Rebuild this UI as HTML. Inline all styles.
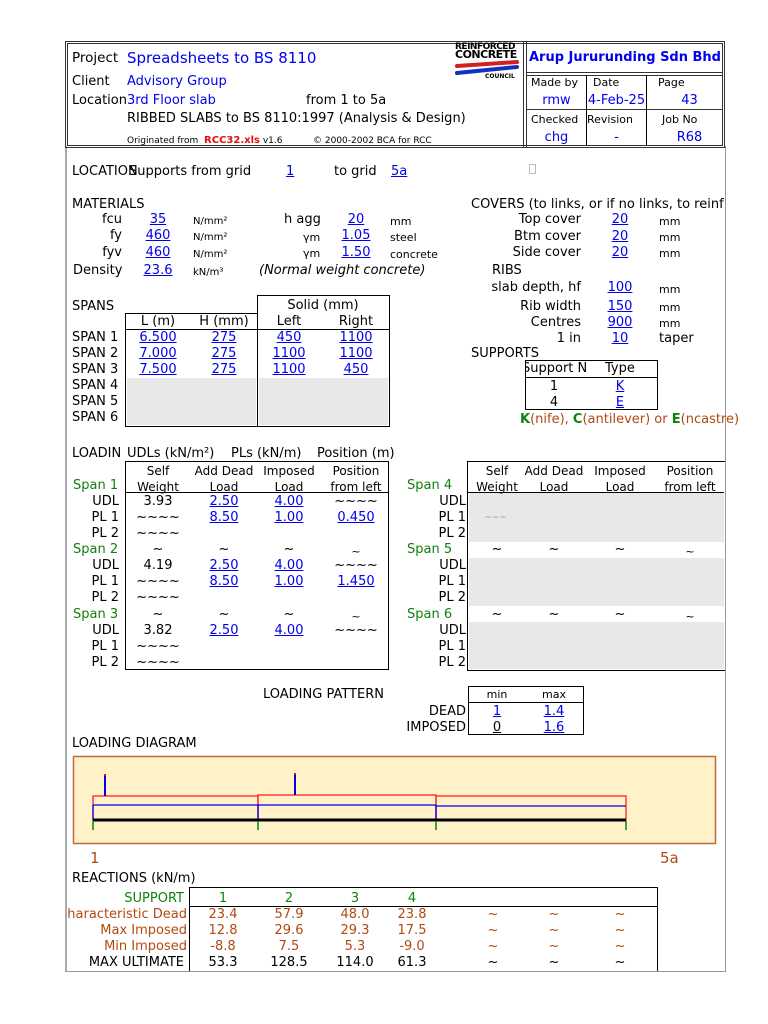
<!DOCTYPE html>
<html><head><meta charset="utf-8"><style>
body{margin:0;background:#fff;width:768px;height:1024px;position:relative;overflow:hidden;font-family:"DejaVu Sans","Liberation Sans",sans-serif;color:#000}
.t{position:absolute;white-space:nowrap;font-size:13px;line-height:16px;transform:translateY(2px)}
.h{font-size:12px}
.r{text-align:right}
.c{text-align:center}
.b{color:#0000ee}
.u{color:#0000ee;text-decoration:underline}
.g{color:#108010}
.br{color:#b04a10}
.s{font-size:10px}
.box{position:absolute;border:1px solid #000;box-sizing:border-box}
.gray{position:absolute;background:#e8e8e8}
.hl{position:absolute;height:1px;background:#000}
.vl{position:absolute;width:1px;background:#000}
</style></head><body>
<div style="position:absolute;left:65px;top:146px;width:658px;height:825px;border:1px solid #999;border-top:none;border-left:2px solid #aaa"></div>
<div style="position:absolute;left:65px;top:41px;width:654px;height:101px;border:3px double #333"></div>
<div style="position:absolute;left:523px;top:41px;width:1px;height:106px;background:#333"></div>
<div style="position:absolute;left:526px;top:41px;width:1px;height:106px;background:#333"></div>
<div class="hl" style="left:526px;top:72px;width:197px;background:#333"></div>
<div class="hl" style="left:526px;top:75px;width:197px;background:#333"></div>
<div class="hl" style="left:526px;top:109px;width:197px;background:#333"></div>
<div class="vl" style="left:586px;top:75px;height:70px"></div>
<div class="vl" style="left:646px;top:75px;height:70px"></div>

<div class="t" style="left:72px;top:48px;font-size:13.5px">Project</div>
<div class="t b" style="left:127px;top:48px;font-size:15px">Spreadsheets to BS 8110</div>
<div class="t" style="left:72px;top:72px">Client</div>
<div class="t b" style="left:127px;top:72px">Advisory Group</div>
<div class="t" style="left:72px;top:91px">Location</div>
<div class="t b" style="left:127px;top:91px">3rd Floor slab</div>
<div class="t" style="left:306px;top:91px">from 1 to 5a</div>
<div class="t" style="left:127px;top:109px">RIBBED SLABS to BS 8110:1997 (Analysis &amp; Design)</div>
<div class="t" style="left:127px;top:131px;font-size:9px">Originated from &nbsp;<span style="color:#e01010;font-weight:bold;font-size:10px">RCC32.xls</span> v1.6</div>
<div class="t" style="left:313px;top:131px;font-size:9px">© 2000-2002 BCA for RCC</div>
<div class="t" style="left:455px;top:43px;font-size:9px;line-height:8px;font-weight:bold;letter-spacing:-0.5px;transform:none">REINFORCED</div>
<div class="t" style="left:455px;top:50px;font-size:11px;line-height:10px;font-weight:900;letter-spacing:-0.5px;transform:none">CONCRETE</div>
<svg style="position:absolute;left:454px;top:60px" width="66" height="18"><line x1="3" y1="6" x2="63" y2="2" stroke="#d02020" stroke-width="4" stroke-linecap="round"/><line x1="3" y1="13" x2="63" y2="7" stroke="#1030c0" stroke-width="4" stroke-linecap="round"/></svg>
<div class="t" style="left:485px;top:73px;font-size:6px;line-height:7px;font-weight:bold;transform:none">COUNCIL</div>

<div class="t c" style="left:527px;top:48px;width:196px;font-weight:bold;color:#0000ee">Arup Jururunding Sdn Bhd</div>
<div class="t" style="left:531px;top:73px;font-size:11px">Made by</div>
<div class="t" style="left:593px;top:73px;font-size:11px">Date</div>
<div class="t" style="left:658px;top:73px;font-size:11px">Page</div>
<div class="t c b" style="left:527px;top:91px;width:59px">rmw</div>
<div class="t c b" style="left:587px;top:91px;width:59px">4-Feb-25</div>
<div class="t c b" style="left:660px;top:91px;width:59px">43</div>
<div class="t" style="left:531px;top:110px;font-size:11px">Checked</div>
<div class="t" style="left:587px;top:110px;font-size:11px">Revision</div>
<div class="t" style="left:662px;top:110px;font-size:11px">Job No</div>
<div class="t c b" style="left:527px;top:128px;width:59px">chg</div>
<div class="t c b" style="left:587px;top:128px;width:59px">-</div>
<div class="t c b" style="left:660px;top:128px;width:59px">R68</div>

<div class="t" style="left:72px;top:162px">LOCATION</div>
<div class="t" style="left:129px;top:162px">Supports from grid</div>
<div class="t u" style="left:286px;top:162px">1</div>
<div class="t" style="left:334px;top:162px">to grid</div>
<div class="t u" style="left:391px;top:162px">5a</div>
<div style="position:absolute;left:529px;top:164px;width:5px;height:8px;border:1px solid #bbb"></div>

<div class="t" style="left:72px;top:195px">MATERIALS</div>
<div class="t r" style="left:60px;top:210px;width:62px">fcu</div>
<div class="t r" style="left:60px;top:226px;width:62px">fy</div>
<div class="t r" style="left:60px;top:243px;width:62px">fyv</div>
<div class="t" style="left:73px;top:261px">Density</div>
<div class="t u c" style="left:138px;top:210px;width:40px">35</div>
<div class="t u c" style="left:138px;top:226px;width:40px">460</div>
<div class="t u c" style="left:138px;top:243px;width:40px">460</div>
<div class="t u c" style="left:138px;top:261px;width:40px">23.6</div>
<div class="t s" style="left:193px;top:212px">N/mm²</div>
<div class="t s" style="left:193px;top:228px">N/mm²</div>
<div class="t s" style="left:193px;top:245px">N/mm²</div>
<div class="t s" style="left:193px;top:263px">kN/m³</div>
<div class="t" style="left:284px;top:210px">h agg</div>
<div class="t s" style="left:303px;top:228px;font-size:11px">γm</div>
<div class="t s" style="left:303px;top:244px;font-size:11px">γm</div>
<div class="t u c" style="left:336px;top:210px;width:40px">20</div>
<div class="t u c" style="left:336px;top:226px;width:40px">1.05</div>
<div class="t u c" style="left:336px;top:243px;width:40px">1.50</div>
<div class="t s" style="left:390px;top:212px;font-size:11px">mm</div>
<div class="t s" style="left:390px;top:228px;font-size:11px">steel</div>
<div class="t s" style="left:390px;top:245px;font-size:11px">concrete</div>
<div class="t" style="left:259px;top:261px;font-style:italic">(Normal weight concrete)</div>

<div class="t" style="left:471px;top:195px">COVERS (to links, or if no links, to reinf</div>
<div class="t r" style="left:460px;top:210px;width:121px">Top cover</div>
<div class="t r" style="left:460px;top:227px;width:121px">Btm cover</div>
<div class="t r" style="left:460px;top:243px;width:121px">Side cover</div>
<div class="t" style="left:492px;top:261px">RIBS</div>
<div class="t r" style="left:460px;top:278px;width:121px">slab depth, hf</div>
<div class="t r" style="left:460px;top:297px;width:121px">Rib width</div>
<div class="t r" style="left:460px;top:313px;width:121px">Centres</div>
<div class="t r" style="left:460px;top:329px;width:121px">1 in</div>
<div class="t u c" style="left:600px;top:210px;width:40px">20</div>
<div class="t u c" style="left:600px;top:227px;width:40px">20</div>
<div class="t u c" style="left:600px;top:243px;width:40px">20</div>
<div class="t u c" style="left:600px;top:278px;width:40px">100</div>
<div class="t u c" style="left:600px;top:297px;width:40px">150</div>
<div class="t u c" style="left:600px;top:313px;width:40px">900</div>
<div class="t u c" style="left:600px;top:329px;width:40px">10</div>
<div class="t" style="left:659px;top:212px;font-size:11px">mm</div>
<div class="t" style="left:659px;top:228px;font-size:11px">mm</div>
<div class="t" style="left:659px;top:244px;font-size:11px">mm</div>
<div class="t" style="left:659px;top:280px;font-size:11px">mm</div>
<div class="t" style="left:659px;top:298px;font-size:11px">mm</div>
<div class="t" style="left:659px;top:314px;font-size:11px">mm</div>
<div class="t" style="left:659px;top:329px">taper</div>
<div class="t" style="left:471px;top:344px">SUPPORTS</div>
<div class="box" style="left:525px;top:360px;width:133px;height:50px"></div>
<div class="hl" style="left:525px;top:377px;width:133px"></div>
<div style="position:absolute;left:526px;top:361px;width:60px;height:17px;overflow:hidden"><div class="t" style="left:-4px;top:-2px">Support No</div></div>
<div class="t" style="left:605px;top:359px">Type</div>
<div class="t c" style="left:534px;top:377px;width:40px">1</div>
<div class="t c" style="left:534px;top:393px;width:40px">4</div>
<div class="t u c" style="left:600px;top:377px;width:40px">K</div>
<div class="t u c" style="left:600px;top:393px;width:40px">E</div>
<div class="t br" style="left:520px;top:410px"><b class="g">K</b>(nife), <b class="g">C</b>(antilever) or <b class="g">E</b>(ncastre)</div>

<div class="t" style="left:72px;top:297px">SPANS</div>
<div class="gray" style="left:127px;top:378px;width:129px;height:47px"></div>
<div class="gray" style="left:259px;top:378px;width:129px;height:47px"></div>
<div class="box" style="left:257px;top:295px;width:133px;height:132px"></div>
<div class="box" style="left:125px;top:313px;width:133px;height:114px"></div>
<div class="hl" style="left:125px;top:329px;width:264px"></div>
<div class="t c" style="left:257px;top:296px;width:132px">Solid (mm)</div>
<div class="t c" style="left:128px;top:312px;width:60px">L (m)</div>
<div class="t c" style="left:194px;top:312px;width:60px">H (mm)</div>
<div class="t c" style="left:259px;top:312px;width:60px">Left</div>
<div class="t c" style="left:326px;top:312px;width:60px">Right</div>
<div class="t" style="left:72px;top:328px">SPAN 1</div>
<div class="t" style="left:72px;top:344px">SPAN 2</div>
<div class="t" style="left:72px;top:360px">SPAN 3</div>
<div class="t" style="left:72px;top:376px">SPAN 4</div>
<div class="t" style="left:72px;top:392px">SPAN 5</div>
<div class="t" style="left:72px;top:408px">SPAN 6</div>
<div class="t u c" style="left:128px;top:328px;width:60px">6.500</div>
<div class="t u c" style="left:194px;top:328px;width:60px">275</div>
<div class="t u c" style="left:259px;top:328px;width:60px">450</div>
<div class="t u c" style="left:326px;top:328px;width:60px">1100</div>
<div class="t u c" style="left:128px;top:344px;width:60px">7.000</div>
<div class="t u c" style="left:194px;top:344px;width:60px">275</div>
<div class="t u c" style="left:259px;top:344px;width:60px">1100</div>
<div class="t u c" style="left:326px;top:344px;width:60px">1100</div>
<div class="t u c" style="left:128px;top:360px;width:60px">7.500</div>
<div class="t u c" style="left:194px;top:360px;width:60px">275</div>
<div class="t u c" style="left:259px;top:360px;width:60px">1100</div>
<div class="t u c" style="left:326px;top:360px;width:60px">450</div>

<div class="t" style="left:72px;top:444px">LOADIN</div>
<div class="t" style="left:127px;top:444px">UDLs (kN/m²)</div>
<div class="t" style="left:231px;top:444px">PLs (kN/m)</div>
<div class="t" style="left:317px;top:444px">Position (m)</div>
<div class="box" style="left:125px;top:461px;width:264px;height:209px"></div>
<div class="hl" style="left:125px;top:492px;width:264px"></div>
<div class="gray" style="left:469px;top:493px;width:255px;height:49px"></div>
<div class="gray" style="left:469px;top:558px;width:255px;height:48px"></div>
<div class="gray" style="left:469px;top:622px;width:255px;height:47px"></div>
<div style="position:absolute;left:467px;top:461px;width:257px;height:208px;border:1px solid #000;border-right:none"></div>
<div class="hl" style="left:467px;top:492px;width:257px"></div>

<div class="t c h" style="left:128px;top:461px;width:60px">Self</div>
<div class="t c h" style="left:128px;top:477px;width:60px">Weight</div>
<div class="t c h" style="left:189px;top:461px;width:70px">Add Dead</div>
<div class="t c h" style="left:189px;top:477px;width:70px">Load</div>
<div class="t c h" style="left:254px;top:461px;width:70px">Imposed</div>
<div class="t c h" style="left:254px;top:477px;width:70px">Load</div>
<div class="t c h" style="left:321px;top:461px;width:70px">Position</div>
<div class="t c h" style="left:321px;top:477px;width:70px">from left</div>
<div class="t c h" style="left:467px;top:461px;width:60px">Self</div>
<div class="t c h" style="left:467px;top:477px;width:60px">Weight</div>
<div class="t c h" style="left:519px;top:461px;width:70px">Add Dead</div>
<div class="t c h" style="left:519px;top:477px;width:70px">Load</div>
<div class="t c h" style="left:585px;top:461px;width:70px">Imposed</div>
<div class="t c h" style="left:585px;top:477px;width:70px">Load</div>
<div class="t c h" style="left:655px;top:461px;width:70px">Position</div>
<div class="t c h" style="left:655px;top:477px;width:70px">from left</div>

<div class="t g" style="left:73px;top:476px">Span 1</div>
<div class="t g" style="left:73px;top:540px">Span 2</div>
<div class="t g" style="left:73px;top:605px">Span 3</div>
<div class="t g" style="left:407px;top:476px">Span 4</div>
<div class="t g" style="left:407px;top:540px">Span 5</div>
<div class="t g" style="left:407px;top:605px">Span 6</div>
<div class="t r" style="left:70px;top:492px;width:49px">UDL</div>
<div class="t r" style="left:70px;top:508px;width:49px">PL 1</div>
<div class="t r" style="left:70px;top:524px;width:49px">PL 2</div>
<div class="t r" style="left:70px;top:556px;width:49px">UDL</div>
<div class="t r" style="left:70px;top:572px;width:49px">PL 1</div>
<div class="t r" style="left:70px;top:588px;width:49px">PL 2</div>
<div class="t r" style="left:70px;top:621px;width:49px">UDL</div>
<div class="t r" style="left:70px;top:637px;width:49px">PL 1</div>
<div class="t r" style="left:70px;top:653px;width:49px">PL 2</div>
<div class="t r" style="left:410px;top:492px;width:56px">UDL</div>
<div class="t r" style="left:410px;top:508px;width:56px">PL 1</div>
<div class="t r" style="left:410px;top:524px;width:56px">PL 2</div>
<div class="t r" style="left:410px;top:556px;width:56px">UDL</div>
<div class="t r" style="left:410px;top:572px;width:56px">PL 1</div>
<div class="t r" style="left:410px;top:588px;width:56px">PL 2</div>
<div class="t r" style="left:410px;top:621px;width:56px">UDL</div>
<div class="t r" style="left:410px;top:637px;width:56px">PL 1</div>
<div class="t r" style="left:410px;top:653px;width:56px">PL 2</div>

<div class="t c" style="left:128px;top:492px;width:60px">3.93</div>
<div class="t u c" style="left:194px;top:492px;width:60px">2.50</div>
<div class="t u c" style="left:259px;top:492px;width:60px">4.00</div>
<div class="t c" style="left:326px;top:492px;width:60px">~~~~</div>
<div class="t c" style="left:128px;top:508px;width:60px">~~~~</div>
<div class="t u c" style="left:194px;top:508px;width:60px">8.50</div>
<div class="t u c" style="left:259px;top:508px;width:60px">1.00</div>
<div class="t u c" style="left:326px;top:508px;width:60px">0.450</div>
<div class="t c" style="left:128px;top:524px;width:60px">~~~~</div>
<div class="t c" style="left:128px;top:540px;width:60px">~</div>
<div class="t c" style="left:194px;top:540px;width:60px">~</div>
<div class="t c" style="left:259px;top:540px;width:60px">~</div>
<div class="t c" style="left:326px;top:542px;width:60px;font-size:11px">~</div>
<div class="t c" style="left:128px;top:556px;width:60px">4.19</div>
<div class="t u c" style="left:194px;top:556px;width:60px">2.50</div>
<div class="t u c" style="left:259px;top:556px;width:60px">4.00</div>
<div class="t c" style="left:326px;top:556px;width:60px">~~~~</div>
<div class="t c" style="left:128px;top:572px;width:60px">~~~~</div>
<div class="t u c" style="left:194px;top:572px;width:60px">8.50</div>
<div class="t u c" style="left:259px;top:572px;width:60px">1.00</div>
<div class="t u c" style="left:326px;top:572px;width:60px">1.450</div>
<div class="t c" style="left:128px;top:588px;width:60px">~~~~</div>
<div class="t c" style="left:128px;top:605px;width:60px">~</div>
<div class="t c" style="left:194px;top:605px;width:60px">~</div>
<div class="t c" style="left:259px;top:605px;width:60px">~</div>
<div class="t c" style="left:326px;top:607px;width:60px;font-size:11px">~</div>
<div class="t c" style="left:128px;top:621px;width:60px">3.82</div>
<div class="t u c" style="left:194px;top:621px;width:60px">2.50</div>
<div class="t u c" style="left:259px;top:621px;width:60px">4.00</div>
<div class="t c" style="left:326px;top:621px;width:60px">~~~~</div>
<div class="t c" style="left:128px;top:637px;width:60px">~~~~</div>
<div class="t c" style="left:128px;top:653px;width:60px">~~~~</div>
<div class="t" style="left:484px;top:508px;font-size:9px;color:#999">~~~</div>
<div class="t c" style="left:467px;top:540px;width:60px">~</div>
<div class="t c" style="left:524px;top:540px;width:60px">~</div>
<div class="t c" style="left:590px;top:540px;width:60px">~</div>
<div class="t c" style="left:660px;top:542px;width:60px;font-size:11px">~</div>
<div class="t c" style="left:467px;top:605px;width:60px">~</div>
<div class="t c" style="left:524px;top:605px;width:60px">~</div>
<div class="t c" style="left:590px;top:605px;width:60px">~</div>
<div class="t c" style="left:660px;top:607px;width:60px;font-size:11px">~</div>

<div class="t" style="left:263px;top:685px">LOADING PATTERN</div>
<div class="box" style="left:468px;top:686px;width:116px;height:49px"></div>
<div class="hl" style="left:468px;top:702px;width:116px"></div>
<div class="t c" style="left:477px;top:685px;width:40px;font-size:11px">min</div>
<div class="t c" style="left:534px;top:685px;width:40px;font-size:11px">max</div>
<div class="t r" style="left:380px;top:702px;width:86px">DEAD</div>
<div class="t r" style="left:380px;top:718px;width:86px">IMPOSED</div>
<div class="t u c" style="left:477px;top:702px;width:40px">1</div>
<div class="t u c" style="left:534px;top:702px;width:40px">1.4</div>
<div class="t u c" style="left:477px;top:718px;width:40px;color:#000">0</div>
<div class="t u c" style="left:534px;top:718px;width:40px">1.6</div>
<div class="t" style="left:72px;top:734px">LOADING DIAGRAM</div>

<svg style="position:absolute;left:0;top:0" width="768" height="1024">
<rect x="73.5" y="756.5" width="642" height="87" fill="#fff2c8" stroke="#c06a40" stroke-width="1.5"/>
<g fill="none" stroke="#ff2020" stroke-width="1.3">
<rect x="93" y="796" width="165" height="24"/>
<rect x="258" y="795" width="178" height="25"/>
<rect x="436" y="796" width="190" height="24"/>
</g>
<g stroke="#0000ee" stroke-width="1.3">
<line x1="93" y1="805" x2="436" y2="805"/>
<line x1="436" y1="806" x2="626" y2="806"/>
<line x1="93" y1="805" x2="93" y2="820"/>
<line x1="258" y1="805" x2="258" y2="820"/>
<line x1="436" y1="805" x2="436" y2="820"/>
<line x1="105" y1="775" x2="105" y2="796" stroke-width="2"/>
<line x1="295" y1="774" x2="295" y2="795" stroke-width="2"/>
</g>
<line x1="105" y1="774" x2="105" y2="776" stroke="#f00" stroke-width="2"/>
<line x1="295" y1="773" x2="295" y2="775" stroke="#f00" stroke-width="2"/>
<line x1="93" y1="820" x2="626" y2="820" stroke="#000" stroke-width="3"/>
<g stroke="#108010" stroke-width="1.5">
<line x1="93" y1="821" x2="93" y2="830"/><line x1="258" y1="821" x2="258" y2="830"/>
<line x1="436" y1="821" x2="436" y2="830"/><line x1="626" y1="821" x2="626" y2="830"/>
</g>
</svg>
<div class="t br" style="left:90px;top:847px;font-size:15px;line-height:18px">1</div>
<div class="t br" style="left:660px;top:847px;font-size:15px;line-height:18px">5a</div>

<div class="t" style="left:72px;top:869px">REACTIONS (kN/m)</div>
<div class="box" style="left:189px;top:887px;width:469px;height:84px;border-bottom:none"></div>
<div class="hl" style="left:189px;top:906px;width:469px"></div>
<div style="position:absolute;left:67px;top:888px;width:121px;height:83px;overflow:hidden">
<div class="t r g" style="left:-80px;top:1px;width:197px">SUPPORT</div>
<div class="t r br" style="left:-80px;top:17px;width:200px">Characteristic Dead</div>
<div class="t r br" style="left:-80px;top:33px;width:200px">Max Imposed</div>
<div class="t r br" style="left:-80px;top:49px;width:200px">Min Imposed</div>
<div class="t r" style="left:-80px;top:65px;width:197px">MAX ULTIMATE</div>
</div>
<div class="t c g" style="left:193px;top:889px;width:60px">1</div>
<div class="t c g" style="left:259px;top:889px;width:60px">2</div>
<div class="t c g" style="left:325px;top:889px;width:60px">3</div>
<div class="t c g" style="left:382px;top:889px;width:60px">4</div>
<div class="t c br" style="left:193px;top:905px;width:60px">23.4</div>
<div class="t c br" style="left:259px;top:905px;width:60px">57.9</div>
<div class="t c br" style="left:325px;top:905px;width:60px">48.0</div>
<div class="t c br" style="left:382px;top:905px;width:60px">23.8</div>
<div class="t c br" style="left:193px;top:921px;width:60px">12.8</div>
<div class="t c br" style="left:259px;top:921px;width:60px">29.6</div>
<div class="t c br" style="left:325px;top:921px;width:60px">29.3</div>
<div class="t c br" style="left:382px;top:921px;width:60px">17.5</div>
<div class="t c br" style="left:193px;top:937px;width:60px">-8.8</div>
<div class="t c br" style="left:259px;top:937px;width:60px">7.5</div>
<div class="t c br" style="left:325px;top:937px;width:60px">5.3</div>
<div class="t c br" style="left:382px;top:937px;width:60px">-9.0</div>
<div class="t c" style="left:193px;top:953px;width:60px">53.3</div>
<div class="t c" style="left:259px;top:953px;width:60px">128.5</div>
<div class="t c" style="left:325px;top:953px;width:60px">114.0</div>
<div class="t c" style="left:382px;top:953px;width:60px">61.3</div>
<div class="t c br" style="left:463px;top:905px;width:60px">~</div><div class="t c br" style="left:524px;top:905px;width:60px">~</div><div class="t c br" style="left:590px;top:905px;width:60px">~</div>
<div class="t c br" style="left:463px;top:921px;width:60px">~</div><div class="t c br" style="left:524px;top:921px;width:60px">~</div><div class="t c br" style="left:590px;top:921px;width:60px">~</div>
<div class="t c br" style="left:463px;top:937px;width:60px">~</div><div class="t c br" style="left:524px;top:937px;width:60px">~</div><div class="t c br" style="left:590px;top:937px;width:60px">~</div>
<div class="t c" style="left:463px;top:953px;width:60px">~</div><div class="t c" style="left:524px;top:953px;width:60px">~</div><div class="t c" style="left:590px;top:953px;width:60px">~</div>
</body></html>
